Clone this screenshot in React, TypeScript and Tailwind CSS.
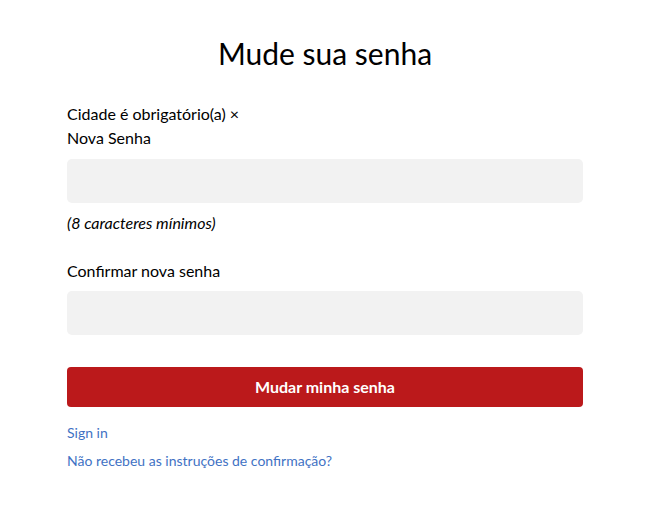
import React from "react";

export default function App() {
  return (
    <div className="min-h-[516px] w-full bg-white text-black" style={{ fontFamily: "Lato, 'Open Sans', sans-serif" }}>
      <div className="ml-[67px] w-[516px] pt-[35px]">
        <h1 className="text-center text-[30px] leading-[36px] font-normal text-black">Mude sua senha</h1>
        <form className="mt-[31px] flex flex-col" onSubmit={(e) => e.preventDefault()}>
          <div className="text-[16px] leading-[24px]">Cidade é obrigatório(a) ×</div>
          <label className="text-[16px] leading-[24px]">Nova Senha</label>
          <input type="password" className="mt-[9px] h-[44px] w-full rounded-[5px] bg-[#f2f2f2] px-3 outline-none" />
          <div className="mt-[8px] text-[16px] leading-[24px] italic">(8 caracteres mínimos)</div>
          <label className="mt-[24px] text-[16px] leading-[24px]">Confirmar nova senha</label>
          <input type="password" className="mt-[8px] h-[44px] w-full rounded-[5px] bg-[#f2f2f2] px-3 outline-none" />
          <button type="submit" className="mt-[32px] h-[40px] w-full rounded-[4px] bg-[#bb191b] text-[16px] font-bold text-white">
            Mudar minha senha
          </button>
        </form>
        <div className="mt-[16px] flex flex-col gap-[8px] text-[14px] leading-[20px] text-[#3f72c4]">
          <a href="#">Sign in</a>
          <a href="#">Não recebeu as instruções de confirmação?</a>
        </div>
      </div>
    </div>
  );
}
